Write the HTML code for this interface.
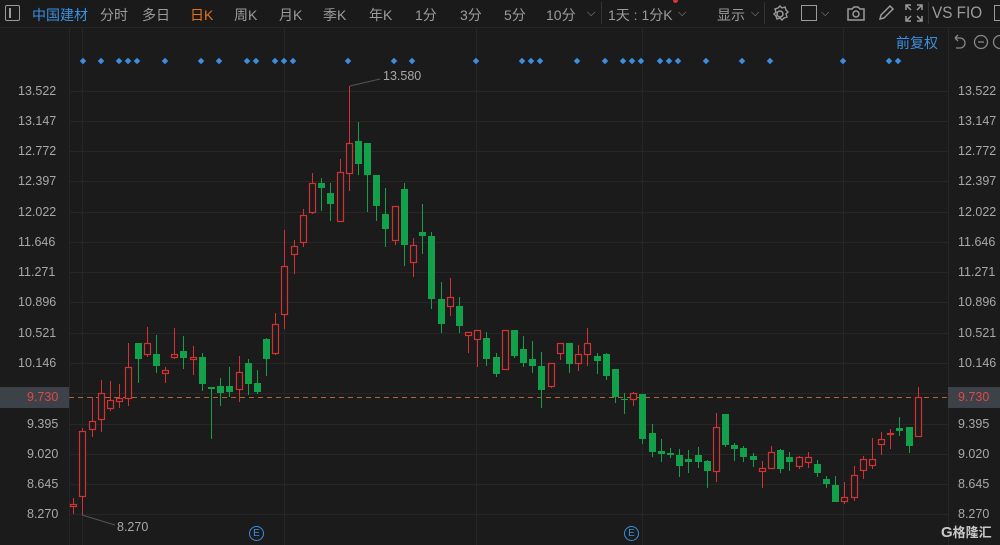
<!DOCTYPE html>
<html><head><meta charset="utf-8">
<style>
body{margin:0;width:1000px;height:545px;background:#1b1b1b;overflow:hidden;font-family:"Liberation Sans","Noto Sans CJK SC",sans-serif;position:relative}
.tb{position:absolute;left:0;top:0;width:1000px;height:27px;background:#1a1a1a;border-bottom:1px solid #262626}
.t{position:absolute;top:5px;font-size:14px;color:#9b9b9b;white-space:nowrap}
.ax{position:absolute;font-size:12.5px;color:#a8a8a8}
.sep{position:absolute;top:2px;width:1px;height:22px;background:#333}
</style></head><body>
<div class="tb">
<div style="position:absolute;left:5px;top:5px;width:13px;height:14px;border:1.5px solid #9b9b9b;border-radius:2px"><div style="position:absolute;left:3px;top:2px;width:1.5px;height:10px;background:#9b9b9b"></div></div>
<div class="t" style="left:32px;color:#3b8fe0">中国建材</div>
<div class="t" style="left:100px">分时</div>
<div class="t" style="left:142px">多日</div>
<div class="t" style="left:190px;color:#e8711c">日K</div>
<div class="t" style="left:234px">周K</div>
<div class="t" style="left:279px">月K</div>
<div class="t" style="left:323px">季K</div>
<div class="t" style="left:369px">年K</div>
<div class="t" style="left:415px">1分</div>
<div class="t" style="left:460px">3分</div>
<div class="t" style="left:504px">5分</div>
<div class="t" style="left:546px">10分</div>
<div class="t" style="left:587px;font-size:11px;top:7px">⌵</div>
<div class="sep" style="left:601px"></div>
<div class="t" style="left:608px">1天 : 1分K</div>
<div class="t" style="left:678px;font-size:11px;top:7px">⌵</div>
<div style="position:absolute;left:673px;top:-2px;width:5px;height:5px;border-radius:3px;background:#e03030"></div>
<div class="t" style="left:717px">显示</div>
<div class="t" style="left:751px;font-size:11px;top:7px">⌵</div>
<div class="sep" style="left:764px"></div>
<svg style="position:absolute;left:770px;top:4px" width="20" height="20" viewBox="0 0 20 20"><circle cx="10" cy="10" r="3" fill="none" stroke="#9b9b9b" stroke-width="1.5"/><path d="M10 2l2 2 3-1 1 3 2 2-2 2 1 3-3 1-2 2-2-2-3 1-1-3-2-2 2-2-1-3 3-1z" fill="none" stroke="#9b9b9b" stroke-width="1.4"/></svg>
<div style="position:absolute;left:801px;top:5px;width:14px;height:14px;border:1.5px solid #9b9b9b"></div>
<div class="t" style="left:821px;font-size:11px;top:7px">⌵</div>
<svg style="position:absolute;left:846px;top:4px" width="20" height="18" viewBox="0 0 20 18"><path d="M2 5h4l2-2h4l2 2h4v11H2z" fill="none" stroke="#9b9b9b" stroke-width="1.5"/><circle cx="10" cy="10" r="3" fill="none" stroke="#9b9b9b" stroke-width="1.5"/></svg>
<svg style="position:absolute;left:877px;top:4px" width="18" height="18" viewBox="0 0 18 18"><path d="M3 15l1-4 9-9 3 3-9 9z" fill="none" stroke="#9b9b9b" stroke-width="1.5"/></svg>
<svg style="position:absolute;left:905px;top:4px" width="18" height="18" viewBox="0 0 18 18"><path d="M1 6V1h5M12 1h5v5M17 12v5h-5M6 17H1v-5M1 1l5 5M17 1l-5 5M17 17l-5-5M1 17l5-5" fill="none" stroke="#9b9b9b" stroke-width="1.5"/></svg>
<div class="sep" style="left:928px"></div>
<div class="t" style="left:932px;font-size:17px;top:3px;transform:scaleX(.9);transform-origin:left">VS FIO</div>
<div style="position:absolute;left:994px;top:5px;width:14px;height:14px;border:1.5px solid #9b9b9b"></div>
</div>
<div class="t" style="left:896px;top:33px;color:#3b8fe0;font-size:14px">前复权</div>
<svg style="position:absolute;left:952px;top:34px" width="48" height="16" viewBox="0 0 48 16"><path d="M3 4h5a5 5 0 0 1 0 10H4M3 4l3-3M3 4l3 3" fill="none" stroke="#888" stroke-width="1.3"/><circle cx="29" cy="8" r="6.5" fill="none" stroke="#888" stroke-width="1.3"/><path d="M26 8h6" stroke="#888" stroke-width="1.3"/><circle cx="48" cy="8" r="6.5" fill="none" stroke="#888" stroke-width="1.3"/></svg>
<svg id="c" style="position:absolute;left:0;top:0" width="1000" height="545"></svg>
<div class="ax" style="left:18px;top:84px">13.522</div>
<div class="ax" style="left:18px;top:114px">13.147</div>
<div class="ax" style="left:18px;top:144px">12.772</div>
<div class="ax" style="left:18px;top:174px">12.397</div>
<div class="ax" style="left:18px;top:205px">12.022</div>
<div class="ax" style="left:18px;top:235px">11.646</div>
<div class="ax" style="left:18px;top:265px">11.271</div>
<div class="ax" style="left:18px;top:295px">10.896</div>
<div class="ax" style="left:18px;top:326px">10.521</div>
<div class="ax" style="left:18px;top:356px">10.146</div>
<div style="position:absolute;left:0;top:387px;width:69px;height:21px;background:#3c4248"></div>
<div class="ax" style="left:27px;top:390px;color:#e04848">9.730</div>
<div class="ax" style="left:27px;top:417px">9.395</div>
<div class="ax" style="left:27px;top:447px">9.020</div>
<div class="ax" style="left:27px;top:477px">8.645</div>
<div class="ax" style="left:27px;top:507px">8.270</div>
<div class="ax" style="left:958px;top:84px">13.522</div>
<div class="ax" style="left:958px;top:114px">13.147</div>
<div class="ax" style="left:958px;top:144px">12.772</div>
<div class="ax" style="left:958px;top:174px">12.397</div>
<div class="ax" style="left:958px;top:205px">12.022</div>
<div class="ax" style="left:958px;top:235px">11.646</div>
<div class="ax" style="left:958px;top:265px">11.271</div>
<div class="ax" style="left:958px;top:295px">10.896</div>
<div class="ax" style="left:958px;top:326px">10.521</div>
<div class="ax" style="left:958px;top:356px">10.146</div>
<div style="position:absolute;left:948px;top:387px;width:52px;height:21px;background:#3c4248"></div>
<div class="ax" style="left:958px;top:390px;color:#e04848">9.730</div>
<div class="ax" style="left:958px;top:417px">9.395</div>
<div class="ax" style="left:958px;top:447px">9.020</div>
<div class="ax" style="left:958px;top:477px">8.645</div>
<div class="ax" style="left:958px;top:507px">8.270</div>
<div class="ax" style="left:383px;top:69px">13.580</div>
<div class="ax" style="left:117px;top:520px">8.270</div>
<div style="position:absolute;left:249px;top:526px;width:13px;height:13px;border:1.5px solid #3b8fe0;border-radius:50%;color:#3b8fe0;font-size:10px;text-align:center;line-height:13px">E</div>
<div style="position:absolute;left:624px;top:526px;width:13px;height:13px;border:1.5px solid #3b8fe0;border-radius:50%;color:#3b8fe0;font-size:10px;text-align:center;line-height:13px">E</div>
<div style="position:absolute;left:941px;top:522px;color:#c8c8c8;font-size:15px;font-weight:bold">G<span style="font-size:13px">格隆汇</span></div>
<script>
var s='';
var gy=[91,121,151,181,212,242,272,302,333,363,393,424,454,484,514];
gy.forEach(function(y){s+='<line x1="69" x2="948" y1="'+(y+.5)+'" y2="'+(y+.5)+'" stroke="#262626"/>';});
[69,82,284,476,642,843,948].forEach(function(x){s+='<line x1="'+(x+.5)+'" x2="'+(x+.5)+'" y1="28" y2="545" stroke="#262626"/>';});
s+='<line x1="69" x2="948" y1="397.5" y2="397.5" stroke="#b5652a" stroke-dasharray="5,4"/>';
s+='<line x1="350" y1="86" x2="380" y2="79" stroke="#555"/><line x1="82" y1="515" x2="115" y2="525" stroke="#555"/>';
[83,101,119,128,137,165,201,219,247,256,275,284,293,348,394,412,476,522,531,540,577,605,623,632,641,660,669,678,706,742,770,843,889,898].forEach(function(x){s+='<rect x="'+(x-2.3)+'" y="58.7" width="4.6" height="4.6" transform="rotate(45 '+x+' 61)" fill="#3b8fe0"/>';});
var d=[[1,498,504,506,514],[1,428,431,496,515],[1,397,421,429,437],[1,380,393,419,432],[1,381,400,408,411],[1,384,398,401,408],[1,343,367,398,406],[0,343,343,359,383],[1,327,343,354,357],[0,335,354,366,373],[1,367,370,373,383],[1,328,354,357,359],[0,336,351,358,369],[1,346,357,359,375],[0,353,357,384,391],[0,387,387,389,439],[0,378,386,393,406],[0,367,386,392,397],[1,356,372,389,402],[0,359,363,384,395],[0,370,383,392,394],[0,338,339,359,376],[1,313,324,353,355],[1,230,266,314,329],[1,240,246,254,274],[1,209,215,242,247],[1,173,183,212,214],[0,178,183,188,211],[0,183,193,204,221],[1,159,172,221,221],[1,86,143,173,191],[0,122,141,164,175],[0,143,143,175,212],[0,175,175,206,221],[0,188,214,229,247],[1,206,206,240,245],[0,183,189,245,266],[1,238,245,262,277],[0,204,232,236,254],[0,232,236,299,309],[0,282,299,324,333],[1,278,297,306,316],[0,297,306,326,333],[1,332,332,335,353],[1,330,330,339,367],[0,332,338,359,366],[0,353,357,374,377],[1,330,330,369,369],[0,330,330,356,358],[0,336,349,363,367],[0,341,359,366,373],[0,352,366,390,408],[1,363,363,386,388],[1,343,343,353,360],[0,343,343,364,373],[1,345,354,363,371],[1,328,343,354,366],[0,353,356,361,374],[0,353,354,376,380],[0,369,369,397,403],[0,393,399,400,414],[1,392,393,399,406],[0,394,394,439,444],[0,424,433,452,457],[0,439,451,454,462],[0,448,453,455,458],[0,449,455,466,477],[0,450,459,462,473],[0,447,455,462,468],[0,460,461,471,488],[1,413,427,471,482],[0,414,414,445,447],[0,443,445,449,461],[0,446,448,457,462],[0,453,456,460,467],[1,461,468,471,488],[1,446,452,468,468],[0,449,450,469,473],[0,452,457,462,471],[1,456,457,466,469],[1,452,457,462,468],[0,460,464,473,477],[0,476,479,484,488],[0,476,485,502,502],[1,482,497,501,504],[1,466,475,497,501],[1,456,459,470,479],[1,438,459,465,469],[1,432,439,444,455],[1,429,433,434,449],[0,417,428,431,436],[0,427,427,446,453],[1,387,397,436,436]];
d.forEach(function(c,i){var x=Math.round(73.3+i*9.18);var col=c[0]?'#d33235':'#13a04a';
s+='<line x1="'+(x+.5)+'" x2="'+(x+.5)+'" y1="'+c[1]+'" y2="'+c[4]+'" stroke="'+col+'"/>';
var h=Math.max(1,c[3]-c[2]);
if(c[0])s+='<rect x="'+(x-2.5)+'" y="'+(c[2]+.5)+'" width="6" height="'+h+'" fill="#1b1b1b" stroke="'+col+'" stroke-width="1.2"/>';
else s+='<rect x="'+(x-3)+'" y="'+c[2]+'" width="7" height="'+h+'" fill="'+col+'"/>';});
document.getElementById('c').innerHTML=s;
</script>
</body></html>
